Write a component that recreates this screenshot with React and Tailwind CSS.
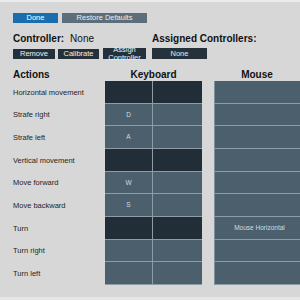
import React from "react";

const rows = [
  { label: "Horizontal movement", dark: true, k1: "", k2: "", m: "" },
  { label: "Strafe right", k1: "D", k2: "", m: "" },
  { label: "Strafe left", k1: "A", k2: "", m: "" },
  { label: "Vertical movement", dark: true, k1: "", k2: "", m: "" },
  { label: "Move forward", k1: "W", k2: "", m: "" },
  { label: "Move backward", k1: "S", k2: "", m: "" },
  { label: "Turn", dark: true, k1: "", k2: "", m: "Mouse Horizontal" },
  { label: "Turn right", k1: "", k2: "", m: "" },
  { label: "Turn left", k1: "", k2: "", m: "" },
];

function Cell({ dark, children, className = "" }) {
  return (
    <div
      className={
        "h-[22.67px] shrink-0 border-b border-[#8d9ca5] flex items-center justify-center text-[6.5px] text-[#d3dce0] " +
        (dark ? "bg-[#222e37] " : "bg-[#4b606c] ") +
        className
      }
    >
      {children}
    </div>
  );
}

export default function App() {
  return (
    <div
      className="w-[300px] h-[300px] overflow-hidden bg-[#d7d7d7] border-t-2 border-t-[#ececec] border-b-[3px] border-b-[#e6e6e6] relative"
      style={{ fontFamily: '"Liberation Sans", Arial, sans-serif' }}
    >
      <div className="pl-[13px] pt-[11px]">
        <div className="flex gap-[4px]">
          <div className="w-[45px] h-[10px] shrink-0 bg-[#1b6eae] text-white text-[7.5px] flex items-center justify-center">
            Done
          </div>
          <div className="w-[85px] h-[10px] shrink-0 bg-[#5b6e79] text-[#e8eef1] text-[7.5px] flex items-center justify-center">
            Restore Defaults
          </div>
        </div>

        <div className="flex mt-[10px]">
          <div className="w-[139px] shrink-0">
            <div className="h-[12px] flex items-center text-[10px] text-[#111] leading-none">
              <span className="font-bold">Controller:</span>
              <span className="ml-[6px]">None</span>
            </div>
            <div className="flex mt-[3px] items-center text-[7.5px] text-[#eef2f4]">
              <div className="w-[42px] h-[10px] shrink-0 bg-[#24313a] flex items-center justify-center">Remove</div>
              <div className="w-[41px] h-[10px] shrink-0 ml-[3px] bg-[#24313a] flex items-center justify-center">Calibrate</div>
              <div className="w-[43px] h-[11px] shrink-0 ml-[4px] bg-[#24313a] flex flex-col items-center justify-center leading-[8px] text-center">
                <span>Assign</span>
                <span>Controller</span>
              </div>
            </div>
          </div>
          <div className="shrink-0">
            <div className="h-[12px] flex items-center text-[10px] text-[#111] font-bold leading-none">
              Assigned Controllers:
            </div>
            <div className="mt-[3px] w-[55px] h-[11px] bg-[#25323b] text-[#e6ecef] text-[7.5px] flex items-center justify-center">
              None
            </div>
          </div>
        </div>

        <div className="flex mt-[10px]">
          <div className="w-[92px] shrink-0">
            <div className="h-[12px] flex items-end text-[10px] font-bold text-[#111] leading-none pb-[1px]">
              Actions
            </div>
            {rows.map((r) => (
              <div key={r.label} className="h-[22.67px] flex items-center text-[7.5px] text-[#1f1f1f]">
                {r.label}
              </div>
            ))}
          </div>
          <div className="w-[97px] shrink-0">
            <div className="h-[12px] flex items-end justify-center text-[10px] font-bold text-[#111] leading-none pb-[1px]">
              Keyboard
            </div>
            {rows.map((r) => (
              <div key={r.label} className="flex">
                <Cell dark={r.dark} className="w-[48px] border-r border-r-[#8d9ca5]">{r.k1}</Cell>
                <Cell dark={r.dark} className="w-[49px]">{r.k2}</Cell>
              </div>
            ))}
          </div>
          <div className="w-[90px] shrink-0 ml-[12px]">
            <div className="h-[12px] flex items-end justify-center text-[10px] font-bold text-[#111] leading-none pb-[1px] pr-[4px]">
              Mouse
            </div>
            {rows.map((r) => (
              <Cell key={r.label} dark={false} className="w-[90px] border-l border-l-[#7f909a]">
                {r.m}
              </Cell>
            ))}
          </div>
        </div>
      </div>
    </div>
  );
}
